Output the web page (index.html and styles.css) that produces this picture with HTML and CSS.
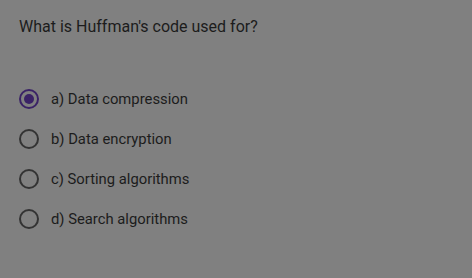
FILE: index.html
```html
<!DOCTYPE html>
<html>
<head>
<meta charset="utf-8">
<link rel="stylesheet" href="styles.css">
</head>
<body>
<div class="quiz">
  <div class="question">What is Huffman's code used for?</div>
  <div class="options">
    <div class="option"><span class="radio checked"></span><span class="label">a) Data compression</span></div>
    <div class="option"><span class="radio"></span><span class="label">b) Data encryption</span></div>
    <div class="option"><span class="radio"></span><span class="label">c) Sorting algorithms</span></div>
    <div class="option"><span class="radio"></span><span class="label">d) Search algorithms</span></div>
  </div>
</div>
</body>
</html>
```
FILE: styles.css
```css
html, body {
  margin: 0;
  padding: 0;
  background: #808080;
  width: 472px;
  height: 278px;
  overflow: hidden;
}
.quiz {
  font-family: Roboto, "Noto Sans", sans-serif;
  color: #1c1c1c;
  padding: 17px 0 0 19px;
}
.question {
  font-size: 16px;
  line-height: 20px;
}
.options {
  margin-top: 52px;
  display: flex;
  flex-direction: column;
  gap: 20px;
}
.option {
  display: flex;
  align-items: center;
  height: 20px;
}
.radio {
  box-sizing: border-box;
  width: 20px;
  height: 20px;
  border: 2px solid #333333;
  border-radius: 50%;
  display: flex;
  align-items: center;
  justify-content: center;
}
.radio.checked {
  border-color: #3a2266;
}
.radio.checked::after {
  content: "";
  width: 10px;
  height: 10px;
  border-radius: 50%;
  background: #3a2266;
}
.label {
  margin-left: 12px;
  font-size: 14.8px;
}
```
